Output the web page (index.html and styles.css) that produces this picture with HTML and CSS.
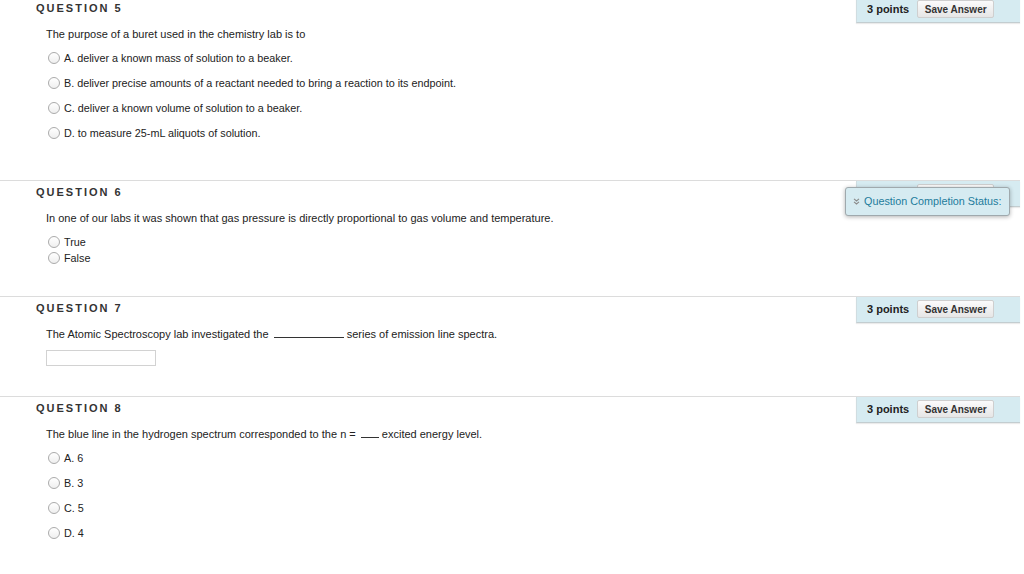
FILE: index.html
```html
<!DOCTYPE html>
<html lang="en">

<head>
    <meta charset="UTF-8">
    <title>Quiz</title>
    <link rel="stylesheet" href="styles.css">
</head>

<body>
    <div class="quiz">
        <!-- question 5 -->
        <div class="question first">
            <div class="q-head">
                <h3>QUESTION 5</h3>
                <div class="points">
                    <span class="pts">3 points</span>
                    <button type="button" class="save">Save Answer</button>
                </div>
            </div>
            <div class="q-body">
                <p class="q-text">The purpose of a buret used in the chemistry lab is to</p>
                <ul class="choices spaced">
                    <li><span class="radio"></span>A. deliver a known mass of solution to a beaker.</li>
                    <li><span class="radio"></span>B. deliver precise amounts of a reactant needed to bring a reaction to its endpoint.</li>
                    <li><span class="radio"></span>C. deliver a known volume of solution to a beaker.</li>
                    <li><span class="radio"></span>D. to measure 25-mL aliquots of solution.</li>
                </ul>
            </div>
        </div>

        <!-- question 6 (its points bar sits under the status popup) -->
        <div class="question">
            <div class="q-head">
                <h3>QUESTION 6</h3>
                <div class="points">
                    <span class="pts-gap"></span>
                    <button type="button" class="save"></button>
                </div>
            </div>
            <div class="q-body">
                <p class="q-text">In one of our labs it was shown that gas pressure is directly proportional to gas volume and temperature.</p>
                <ul class="choices">
                    <li><span class="radio"></span>True</li>
                    <li><span class="radio"></span>False</li>
                </ul>
            </div>
            <div class="status-pop">
                <svg class="chev" width="7" height="7" viewBox="0 0 7 7">
                    <polyline points="1,0.8 3.5,3 6,0.8" fill="none" stroke="#8a8a8a" stroke-width="1.1"/>
                    <polyline points="1,3.8 3.5,6 6,3.8" fill="none" stroke="#8a8a8a" stroke-width="1.1"/>
                </svg>Question Completion Status:
            </div>
        </div>

        <!-- question 7 -->
        <div class="question">
            <div class="q-head">
                <h3>QUESTION 7</h3>
                <div class="points">
                    <span class="pts">3 points</span>
                    <button type="button" class="save">Save Answer</button>
                </div>
            </div>
            <div class="q-body">
                <p class="q-text">The Atomic Spectroscopy lab investigated the <span class="blank long"></span> series of emission line spectra.</p>
                <input type="text" class="answer">
            </div>
        </div>

        <!-- question 8 -->
        <div class="question">
            <div class="q-head">
                <h3>QUESTION 8</h3>
                <div class="points">
                    <span class="pts">3 points</span>
                    <button type="button" class="save">Save Answer</button>
                </div>
            </div>
            <div class="q-body">
                <p class="q-text">The blue line in the hydrogen spectrum corresponded to the n = <span class="blank"></span> excited energy level.</p>
                <ul class="choices spaced">
                    <li><span class="radio"></span>A. 6</li>
                    <li><span class="radio"></span>B. 3</li>
                    <li><span class="radio"></span>C. 5</li>
                    <li><span class="radio"></span>D. 4</li>
                </ul>
            </div>
        </div>
    </div>
</body>

</html>
```

FILE: styles.css
```css
body {
    margin: 0;
    background: #fff;
    font-family: "Liberation Sans", Arial, Helvetica, sans-serif;
    color: #333;
    overflow: hidden;
}

.quiz {
    width: 1020px;
}

.question {
    position: relative;
    border-top: 1px solid #dcdcdc;
    padding-bottom: 30px;
}

.question.first {
    margin-top: -4px;
}

.q-head {
    display: flex;
    justify-content: space-between;
    align-items: flex-start;
}

.q-head h3 {
    margin: 0;
    padding: 4px 0 0 36px;
    font-size: 11px;
    line-height: 14px;
    letter-spacing: 2px;
    font-weight: bold;
    color: #333;
}

.points {
    display: flex;
    align-items: center;
    width: 153px;
    height: 22px;
    padding: 1px 0 2px 10px;
    background: #d6ebf1;
    border-left: 1px solid #d0dde1;
    border-bottom: 1px solid #c3cdd0;
    box-shadow: 0 1px 1px rgba(0, 0, 0, 0.08);
}

.pts {
    font-size: 11px;
    font-weight: bold;
    color: #222;
    margin-right: 8px;
}

.pts-gap {
    width: 50px;
}

.save {
    width: 77px;
    height: 18px;
    padding: 0;
    font-family: "Liberation Sans", Arial, sans-serif;
    font-size: 10px;
    font-weight: bold;
    color: #333;
    background: linear-gradient(#fbfbfb, #e6e6e6);
    border: 1px solid #cfcfcf;
    border-radius: 2px;
    cursor: pointer;
}

.q-body {
    padding: 4px 0 0 46px;
}

.q-text {
    margin: 0 0 9px;
    font-size: 11px;
    line-height: 14px;
    color: #222;
}

.choices {
    list-style: none;
    margin: 0;
    padding: 0;
}

.choices li {
    display: flex;
    align-items: center;
    height: 16px;
    font-size: 10.8px;
    color: #222;
}

.choices.spaced li {
    margin-bottom: 9px;
}

.radio {
    width: 12px;
    height: 12px;
    margin: 0 4px 0 2px;
    border: 1px solid #ababab;
    border-radius: 50%;
    background: linear-gradient(#fff, #efefef);
    box-sizing: border-box;
}

.blank {
    display: inline-block;
    width: 18px;
    margin-left: 2px;
    border-bottom: 1px solid #333;
    vertical-align: baseline;
}

.blank.long {
    width: 70px;
}

.answer {
    display: block;
    width: 110px;
    height: 16px;
    margin: 3px 0 0;
    padding: 0 3px;
    border: 1px solid #d2d2d2;
    box-sizing: border-box;
}

.status-pop {
    position: absolute;
    top: 6px;
    left: 845px;
    width: 165px;
    height: 29px;
    box-sizing: border-box;
    padding: 7px 0 0 7px;
    background: #d6ebf1;
    border: 1px solid #9fa9ad;
    border-radius: 3px;
    box-shadow: 0 1px 4px rgba(0, 0, 0, 0.3);
    font-size: 10.8px;
    color: #1d7c9c;
    white-space: nowrap;
}

.chev {
    margin-right: 4px;
    vertical-align: 0;
}
```
